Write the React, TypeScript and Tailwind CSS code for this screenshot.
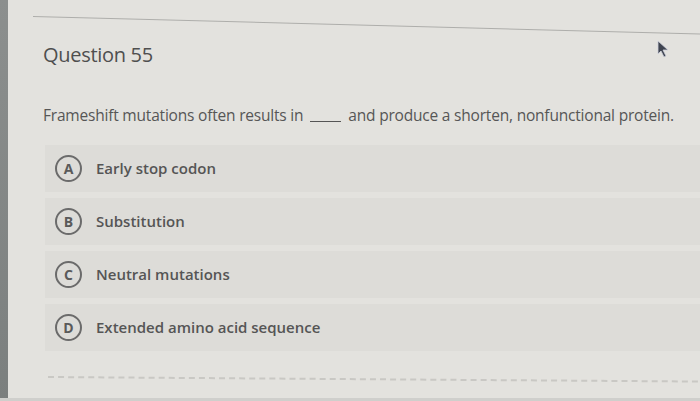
const options = [
  { letter: "A", text: "Early stop codon" },
  { letter: "B", text: "Substitution" },
  { letter: "C", text: "Neutral mutations" },
  { letter: "D", text: "Extended amino acid sequence" },
];

function Cursor() {
  return (
    <svg width="14" height="18" viewBox="0 0 14 18" className="absolute left-[656px] top-[40px]">
      <path d="M2 1 L2 14 L5 11 L8 17 L10 16 L7 10 L12 10 Z" fill="#3f4450" stroke="#cfd2dc" strokeWidth="0.8" />
    </svg>
  );
}

export default function App() {
  return (
    <div
      className="relative flex h-[401px] w-[700px] overflow-hidden bg-[#e3e2de] text-[#565656]"
      style={{ fontFamily: '"Open Sans", "Noto Sans", sans-serif' }}
    >
      <div className="w-[8px] shrink-0 bg-gradient-to-b from-[#8c8f8e] to-[#7b7f7e]" />
      <div className="flex flex-1 flex-col">
        <div className="ml-[25px] mt-[16px] w-[690px] origin-left rotate-[1.5deg] border-t border-[#aeaeab]" />
        <div className="ml-[35px] mt-[24px] text-[20px] leading-[28px] tracking-[-0.3px] text-[#4f4f4f]">Question 55</div>
        <div className="ml-[35px] mt-[36px] flex items-end text-[15.5px] leading-[20px] tracking-[-0.2px]">
          <span>Frameshift mutations often results in</span>
          <span className="mx-[7px] mb-[3px] inline-block w-[31px] border-b border-[#555]" />
          <span>and produce a shorten, nonfunctional protein.</span>
        </div>
        <div className="ml-[37px] mt-[20px] flex flex-col gap-[6px]">
          {options.map((o) => (
            <div key={o.letter} className="flex h-[47px] items-center bg-[#dddcd8] pl-[10px]">
              <div className="flex h-[27px] w-[27px] items-center justify-center rounded-full border-2 border-[#6b6b6b] text-[14px] font-bold text-[#5a5a5a]">
                {o.letter}
              </div>
              <span className="ml-[14px] text-[15px] font-semibold text-[#555]">{o.text}</span>
            </div>
          ))}
        </div>
        <div className="ml-[40px] mt-[25px] w-[660px] origin-left rotate-[0.4deg] border-t-2 border-dashed border-[#c9c8c4]" />
      </div>
      <div className="absolute bottom-0 left-0 h-[3px] w-full bg-[#cfcfcc]" />
      <Cursor />
    </div>
  );
}
